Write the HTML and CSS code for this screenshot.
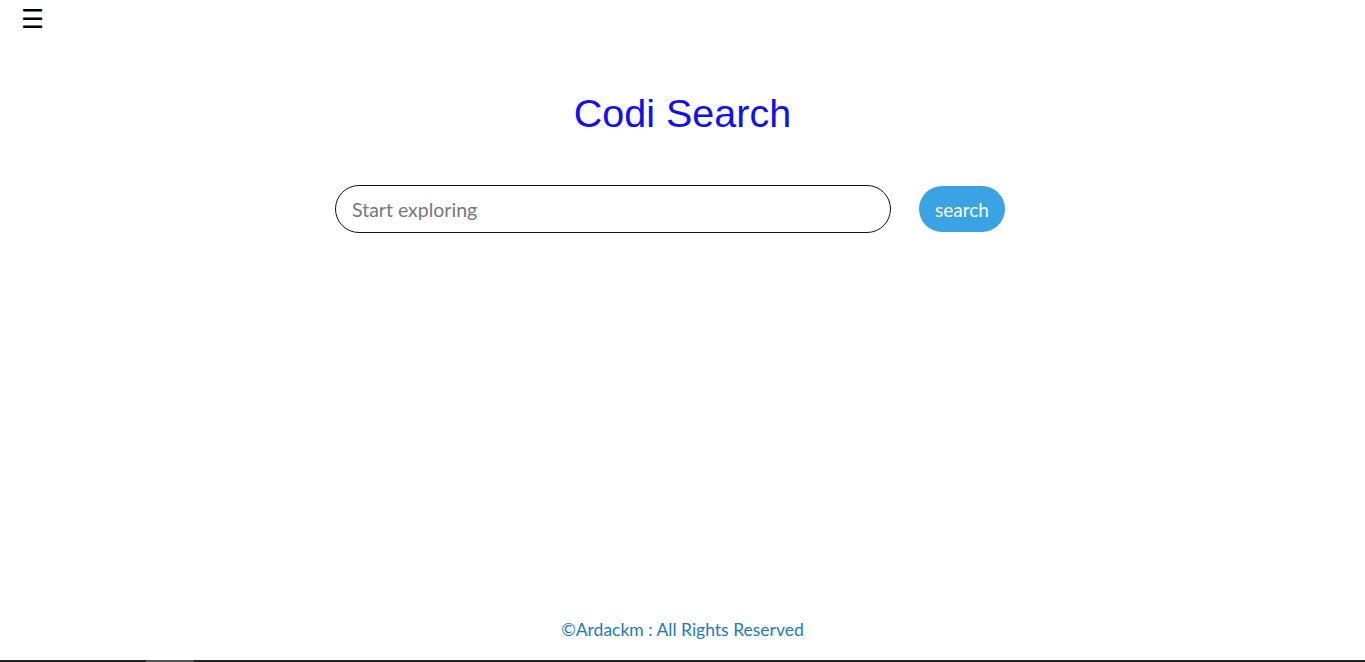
FILE: index.html
```html
<!DOCTYPE html>
<html lang="en">
<head>
  <meta charset="UTF-8">
  <title>Codi Search</title>
  <link rel="stylesheet" href="styles.css">
</head>
<body>
  <header class="topbar">
    <span class="menu-icon">&#9776;</span>
  </header>

  <main class="main">
    <h1 class="title">Codi Search</h1>
    <form class="search-form">
      <input type="text" class="search-input" placeholder="Start exploring">
      <button type="submit" class="search-btn">search</button>
    </form>
  </main>

  <footer class="footer">
    <p>&copy;Ardackm : All Rights Reserved</p>
  </footer>

  <div class="bottom-bar"><div class="bottom-thumb"></div></div>
</body>
</html>
```

FILE: styles.css
```css
html, body {
  height: 100%;
}

body {
  margin: 0;
  background: #fff;
  font-family: Lato, "Open Sans", sans-serif;
  display: flex;
  flex-direction: column;
}

.topbar {
  height: 50px;
  padding-left: 21px;
}

.menu-icon {
  display: inline-block;
  font-family: "DejaVu Sans", sans-serif;
  font-size: 26px;
  line-height: 38px;
  color: #000;
}

.main {
  flex: 1;
  display: flex;
  flex-direction: column;
  align-items: center;
}

.title {
  font-family: "Liberation Sans", Arial, sans-serif;
  font-weight: normal;
  font-size: 39.5px;
  color: #1010f0;
  margin: 41px 0 49px;
}

.search-form {
  display: flex;
  align-items: center;
  gap: 28px;
  margin-right: 25px;
}

.search-input {
  width: 556px;
  height: 48px;
  box-sizing: border-box;
  border: 1px solid #111;
  border-radius: 24px;
  padding: 0 16px;
  font-family: Lato, sans-serif;
  font-size: 19.5px;
  color: #333;
  outline: none;
}

.search-input::placeholder {
  color: #777;
}

.search-btn {
  width: 86px;
  height: 46px;
  border: none;
  border-radius: 23px;
  background: #3aa3e3;
  color: #fff;
  font-family: Lato, sans-serif;
  font-size: 19px;
  cursor: pointer;
}

.footer {
  text-align: center;
  padding-bottom: 20px;
}

.footer p {
  margin: 0;
  font-size: 17.5px;
  color: #1f78c0;
}

.bottom-bar {
  height: 2px;
  background: #222;
  position: relative;
}

.bottom-thumb {
  position: absolute;
  left: 146px;
  width: 48px;
  top: 0;
  bottom: 0;
  background: #555;
}
```
